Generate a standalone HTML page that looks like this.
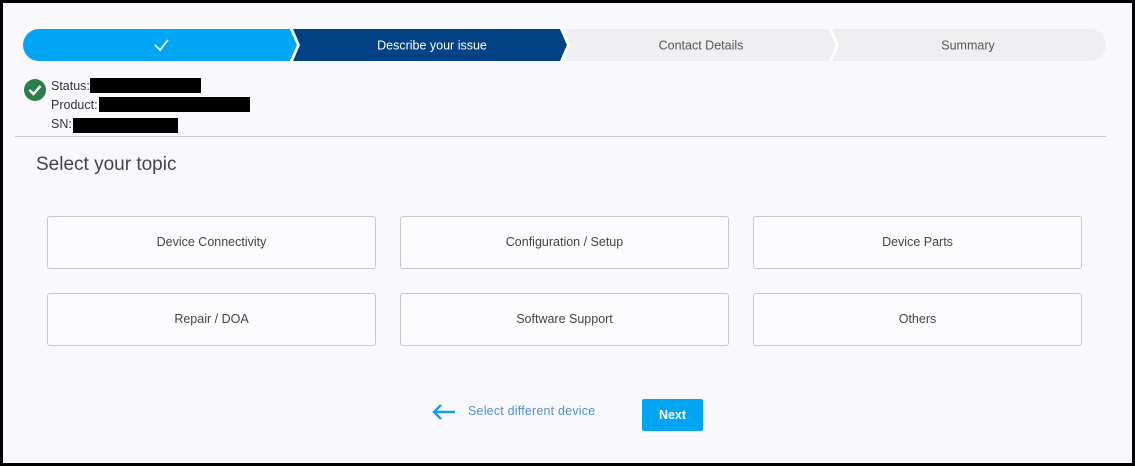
<!DOCTYPE html>
<html><head><style>
html,body{margin:0;padding:0;}
body{width:1135px;height:466px;background:#000;position:relative;overflow:hidden;font-family:"Liberation Sans",sans-serif;}
.pg{position:absolute;left:3px;top:3px;width:1129px;height:460px;background:#f9f9fd;}
.a{position:absolute;}
.t{font-size:12.5px;color:#333;}
.box{position:absolute;width:327px;height:50px;padding-bottom:1px;border:1px solid #c8c8c8;border-radius:3px;background:#fcfcfe;font-size:12.5px;color:#444;display:flex;align-items:center;justify-content:center;}
.blk{position:absolute;background:#000;height:15px;}
</style></head><body>
<div class="pg"></div>
<svg class="a" style="left:0;top:0" width="1135" height="110">
<defs><clipPath id="c"><rect x="23" y="29" width="1083" height="32" rx="16"/></clipPath></defs>
<g clip-path="url(#c)">
<rect x="0" y="29" width="1135" height="32" fill="#efeff1"/>
<polygon points="0,29 290,29 297,45 290,61 0,61" fill="#00a6f4"/>
<polygon points="290,29 293,29 300,45 293,61 290,61 297,45" fill="#fff"/>
<polygon points="293,29 560,29 567,45 560,61 293,61 300,45" fill="#004283"/>
<polygon points="560,29 563,29 570,45 563,61 560,61 567,45" fill="#fff"/>
<polygon points="829,29 832,29 839,45 832,61 829,61 836,45" fill="#fff"/>
</g>
<polyline points="155,45 160,50 168,40" fill="none" stroke="#fff" stroke-width="1.6"/>
<text x="432" y="49.5" fill="#fff" font-size="12.5" text-anchor="middle" font-family="Liberation Sans">Describe your issue</text>
<text x="701" y="49.5" fill="#555" font-size="12.5" text-anchor="middle" font-family="Liberation Sans">Contact Details</text>
<text x="968" y="49.5" fill="#555" font-size="12.5" text-anchor="middle" font-family="Liberation Sans">Summary</text>
<circle cx="35" cy="90" r="11" fill="#2e7d4a"/>
<polyline points="29.5,90 33.5,94 40.5,86" fill="none" stroke="#fff" stroke-width="2.4"/>
</svg>
<div class="a t" style="left:51px;top:79px">Status:</div><div class="blk" style="left:90px;top:78px;width:111px"></div>
<div class="a t" style="left:51px;top:98px">Product:</div><div class="blk" style="left:99px;top:97px;width:151px"></div>
<div class="a t" style="left:51px;top:117px">SN:</div><div class="blk" style="left:73px;top:118px;width:105px"></div>
<div class="a" style="left:15px;top:136px;width:1091px;height:1px;background:#c8c8cc"></div>
<div class="a" style="left:36px;top:154px;font-size:19px;color:#444">Select your topic</div>
<div class="box" style="left:47px;top:216px">Device Connectivity</div>
<div class="box" style="left:400px;top:216px">Configuration / Setup</div>
<div class="box" style="left:753px;top:216px">Device Parts</div>
<div class="box" style="left:47px;top:293px">Repair / DOA</div>
<div class="box" style="left:400px;top:293px">Software Support</div>
<div class="box" style="left:753px;top:293px">Others</div>
<svg class="a" style="left:430px;top:402px" width="28" height="20"><path d="M4 10H25M11 3L4 10L11 17" fill="none" stroke="#1a9be6" stroke-width="2.4"/></svg>
<div class="a" style="left:468px;top:404px;font-size:12.5px;color:#4d8fd6;letter-spacing:0.2px">Select different device</div>
<div class="a" style="left:642px;top:399px;width:61px;height:32px;background:#00a6f4;border-radius:2px;color:#fff;font-size:12.5px;font-weight:bold;display:flex;align-items:center;justify-content:center">Next</div>
</body></html>
